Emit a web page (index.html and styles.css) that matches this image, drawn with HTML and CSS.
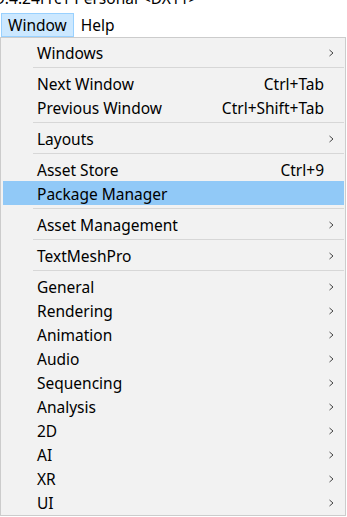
FILE: index.html
```html
<!DOCTYPE html>
<html lang="en">
<head>
<meta charset="UTF-8">
<title>Window menu</title>
<link rel="stylesheet" href="styles.css">
</head>
<body>

<div class="titlebar"><span>9.4.24f1c1 Personal &lt;DX11&gt;</span></div>

<div class="menubar">
    <div class="top-item open">Window</div>
    <div class="top-item">Help</div>
</div>

<div class="menu" id="menu"></div>

<script>
const items = [
    { label: "Windows", sub: true },
    "-",
    { label: "Next Window", key: "Ctrl+Tab" },
    { label: "Previous Window", key: "Ctrl+Shift+Tab" },
    "-",
    { label: "Layouts", sub: true },
    "-",
    { label: "Asset Store", key: "Ctrl+9" },
    { label: "Package Manager", hover: true },
    "-",
    { label: "Asset Management", sub: true },
    "-",
    { label: "TextMeshPro", sub: true },
    "-",
    { label: "General", sub: true },
    { label: "Rendering", sub: true },
    { label: "Animation", sub: true },
    { label: "Audio", sub: true },
    { label: "Sequencing", sub: true },
    { label: "Analysis", sub: true },
    { label: "2D", sub: true },
    { label: "AI", sub: true },
    { label: "XR", sub: true },
    { label: "UI", sub: true }
];

const chevron = `<svg width="7" height="8" viewBox="0 0 7 8"><path d="M1.5 1 L5 4 L1.5 7" fill="none" stroke="#444" stroke-width="1"/></svg>`;

let html = "";
items.forEach(it => {
    if (it === "-") {
        html += `<div class="sep"></div>`;
        return;
    }
    html += `
        <div class="item${it.hover ? " hover" : ""}">
            <span class="label">${it.label}</span>
            <span class="key">${it.key || ""}</span>
            <span class="arrow">${it.sub ? chevron : ""}</span>
        </div>
    `;
});
document.getElementById("menu").innerHTML = html;
</script>

</body>
</html>
```

FILE: styles.css
```css
body {
    margin: 0;
    background: #ffffff;
    font-family: "Noto Sans", "Open Sans", sans-serif;
    font-size: 15.5px;
    color: #000;
}

.titlebar {
    height: 8px;
    overflow: hidden;
    display: flex;
    align-items: flex-end;
    margin-left: -4px;
}

.titlebar span {
    line-height: 20px;
    white-space: nowrap;
}

.menubar {
    display: flex;
    margin-top: 5px;
    padding-left: 1px;
}

.top-item {
    height: 22px;
    line-height: 22px;
    padding: 0 6px;
    border: 1px solid transparent;
}

.top-item.open {
    background: #cce8ff;
    border-color: #99d1ff;
}

.menu {
    width: 344px;
    border: 1px solid #cccccc;
    background: #f2f2f2;
    padding: 2px 0 1px;
}

.item {
    display: flex;
    align-items: center;
    box-sizing: border-box;
    height: 24px;
    margin: 0 1px 0 2px;
    padding: 2px 0 0 34px;
}

.item.hover {
    background: #91c9f7;
}

.label {
    flex: 1;
    white-space: nowrap;
}

.key {
    white-space: nowrap;
}

.arrow {
    width: 20px;
    display: flex;
    justify-content: flex-end;
    padding-right: 9px;
    box-sizing: border-box;
}

.sep {
    height: 1px;
    background: #d7d7d7;
    margin: 3px 1px 3px 32px;
}
```
